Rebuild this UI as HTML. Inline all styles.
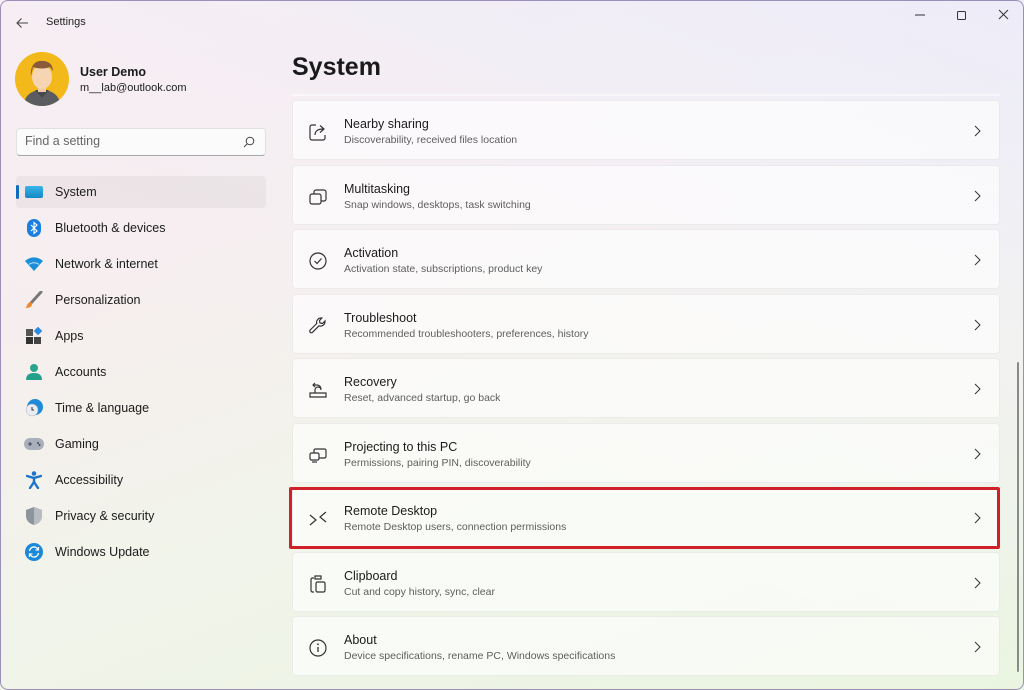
<!DOCTYPE html>
<html><head><meta charset="utf-8"><style>
*{margin:0;padding:0;box-sizing:border-box}
body{width:1024px;height:690px;overflow:hidden;font-family:"Segoe UI","Liberation Sans",sans-serif;color:#1b1b1b;position:relative;
background:linear-gradient(160deg,#f7ecef 0%,#f6eeee 30%,#f1f4ea 60%,#eaf5e1 100%);}
.ov{position:absolute;inset:0;background:linear-gradient(200deg,rgba(236,236,250,.9) 0%,rgba(244,240,248,.5) 35%,rgba(255,255,255,0) 65%)}
.frame{position:absolute;inset:0;border:1px solid #9a8fb8;border-radius:8px}
.abs{position:absolute}
.nav{position:absolute;left:16px;width:250px;height:32px;display:flex;align-items:center;font-size:12.5px}
.nav .ic{width:20px;height:20px;margin-left:8px;margin-right:11px;display:flex;align-items:center;justify-content:center}
.card{position:absolute;left:292px;width:708px;height:60px;background:rgba(255,255,255,.62);border:1px solid rgba(0,0,0,.06);border-radius:4px}
.card .t{position:absolute;left:51px;top:16px;font-size:12.5px;color:#1b1b1b}
.card .s{position:absolute;left:51px;top:33px;font-size:10.5px;color:#5e5e5e}
.card .i{position:absolute;left:14px;top:20px;width:22px;height:22px}
.card .c{position:absolute;right:16px;top:24px;width:12px;height:12px}
</style></head><body>
<div class="ov"></div>
<div class="frame"></div>
<svg class="abs" style="left:15px;top:16px" width="14" height="14" viewBox="0 0 14 14"><path d="M13 7H2M6.5 2.5L2 7l4.5 4.5" stroke="#444" fill="none" stroke-width="1.1"/></svg>
<div class="abs" style="left:46px;top:16px;font-size:11px;color:#222">Settings</div>
<svg class="abs" style="left:914px;top:8px" width="100" height="16"><path d="M1 7h10" stroke="#333"/><rect x="43.5" y="3.5" width="8" height="8" rx="1" stroke="#333" fill="none"/><path d="M85 2l9 9M94 2l-9 9" stroke="#333"/></svg>
<svg class="abs" style="left:15px;top:52px" width="54" height="54" viewBox="0 0 54 54"><defs><clipPath id="cc"><circle cx="27" cy="27" r="27"/></clipPath></defs><circle cx="27" cy="27" r="27" fill="#f3b91a"/><g clip-path="url(#cc)"><path d="M8 54c2-12 10-16 19-16s17 4 19 16z" fill="#5a5c62"/><path d="M20 38l7 8 7-8" fill="#46484d"/><rect x="23" y="32" width="8" height="8" fill="#f0cba5"/><ellipse cx="27" cy="25" rx="10" ry="12" fill="#f5d5b2"/><path d="M16 24c-1-10 4-16 12-15 6 0 10 4 10 10l-3-4c-4 2-12 2-17 0z" fill="#8a5a3b"/></g></svg>
<div class="abs" style="left:80px;top:65px;font-size:12.5px;font-weight:bold">User Demo</div>
<div class="abs" style="left:80px;top:82px;font-size:11px">m__lab@outlook.com</div>
<div class="abs" style="left:16px;top:128px;width:250px;height:28px;background:#fbfbfb;border:1px solid #e3e0e0;border-bottom-color:#a8a8a8;border-radius:4px"></div>
<div class="abs" style="left:25px;top:134px;font-size:12.5px;color:#666">Find a setting</div>
<svg class="abs" style="left:243px;top:136px" width="12" height="12"><circle cx="7" cy="5" r="3.8" stroke="#444" fill="none"/><path d="M4.3 7.7L1 11" stroke="#444"/></svg>

<div class="nav" style="top:176px;background:rgba(0,0,0,.04);border-radius:4px"><div class="abs" style="left:0;top:9px;width:3px;height:14px;background:#0f6cbd;border-radius:2px"></div><div class="ic"><div style="width:18px;height:12px;background:linear-gradient(#3ab5e8,#1587c6);border-radius:2px"></div></div>System</div>
<div class="nav" style="top:212px"><div class="ic"><svg width="14" height="18"><rect width="14" height="18" rx="7" fill="#1b7fe0"/><path d="M4 6l6 6-3 2.5V3.5l3 2.5-6 6" stroke="#fff" fill="none" stroke-width="1.1"/></svg></div>Bluetooth &amp; devices</div>
<div class="nav" style="top:248px"><div class="ic"><svg width="18" height="14"><path d="M0 4a13 13 0 0 1 18 0L9 14z" fill="#1a8ed8"/><path d="M4 7.5a8 8 0 0 1 10 0" stroke="#bfe6fb" fill="none" stroke-width="1"/></svg></div>Network &amp; internet</div>
<div class="nav" style="top:284px"><div class="ic"><svg width="18" height="18"><path d="M16 1L6 12" stroke="#777" stroke-width="3" stroke-linecap="round"/><path d="M6 11c-3 0-4 3-5 6 3 0 6-1 6-4z" fill="#ef8a2c"/></svg></div>Personalization</div>
<div class="nav" style="top:320px"><div class="ic"><svg width="18" height="18"><rect x="1" y="2" width="7" height="7" fill="#555"/><rect x="1" y="10" width="7" height="7" fill="#333"/><rect x="9" y="10" width="7" height="7" fill="#444"/><rect x="10" y="1" width="6" height="6" fill="#2b8be0" transform="rotate(45 13 4)"/></svg></div>Apps</div>
<div class="nav" style="top:356px"><div class="ic"><svg width="16" height="18"><circle cx="8" cy="5" r="4" fill="#2aa58d"/><path d="M0 17c0-5 3-7 8-7s8 2 8 7z" fill="#22a08a"/></svg></div>Accounts</div>
<div class="nav" style="top:392px"><div class="ic"><svg width="18" height="18"><circle cx="10" cy="8" r="8" fill="#1f8bd8"/><circle cx="7" cy="11" r="6" fill="#e9edf2" stroke="#aab" stroke-width=".5"/><path d="M7 8v3h2" stroke="#333" fill="none"/></svg></div>Time &amp; language</div>
<div class="nav" style="top:428px"><div class="ic"><svg width="20" height="12"><rect width="20" height="12" rx="6" fill="#a9b0bc"/><path d="M4 6h4M6 4v4" stroke="#445"/><circle cx="14" cy="5" r="1" fill="#445"/><circle cx="15.5" cy="7" r="1" fill="#445"/></svg></div>Gaming</div>
<div class="nav" style="top:464px"><div class="ic"><svg width="16" height="18"><circle cx="8" cy="2.5" r="2.3" fill="#1b74c9"/><path d="M1 5l7 2 7-2M8 7v4l-4 6M8 11l4 6" stroke="#1b74c9" stroke-width="2.4" fill="none" stroke-linecap="round"/></svg></div>Accessibility</div>
<div class="nav" style="top:500px"><div class="ic"><svg width="16" height="18"><path d="M8 0l8 3v6c0 5-4 8-8 9-4-1-8-4-8-9V3z" fill="#8e949c"/><path d="M8 0l8 3v6c0 5-4 8-8 9z" fill="#b7bcc3"/></svg></div>Privacy &amp; security</div>
<div class="nav" style="top:536px"><div class="ic"><svg width="18" height="18"><circle cx="9" cy="9" r="9" fill="#1b88d8"/><path d="M4.5 8a4.5 4.5 0 0 1 8.5-1.5M13.5 10a4.5 4.5 0 0 1-8.5 1.5" stroke="#fff" fill="none" stroke-width="1.4"/><path d="M13.5 4v3h-3M4.5 14v-3h3" stroke="#fff" fill="none" stroke-width="1.2"/></svg></div>Windows Update</div>

<div class="abs" style="left:292px;top:53px;font-size:25px;font-weight:600;color:#1a1a1a">System</div>
<div class="abs" style="left:292px;top:94px;width:708px;height:2px;background:rgba(255,255,255,.5)"></div>
<div class="abs" style="left:1017px;top:362px;width:2px;height:310px;background:#8a8a8a;border-radius:1px"></div>

<div class="card" style="top:100px"><svg class="i" viewBox="0 0 22 22"><path d="M9 4H5a2 2 0 0 0-2 2v11a2 2 0 0 0 2 2h11a2 2 0 0 0 2-2v-3" stroke="#333" fill="none" stroke-width="1.2"/><path d="M8 14c0-4 3-6 8-6M13 4.5l4 3.5-4 3.5" stroke="#333" fill="none" stroke-width="1.2"/></svg><div class="t">Nearby sharing</div><div class="s">Discoverability, received files location</div><svg class="c"><path d="M4 1l5 5-5 5" stroke="#333" fill="none"/></svg></div>
<div class="card" style="top:165px"><svg class="i" viewBox="0 0 22 22"><rect x="3" y="8" width="11" height="10" rx="2" stroke="#333" fill="none" stroke-width="1.2"/><path d="M7 8V6a2 2 0 0 1 2-2h8a2 2 0 0 1 2 2v7a2 2 0 0 1-2 2h-3" stroke="#333" fill="none" stroke-width="1.2"/></svg><div class="t">Multitasking</div><div class="s">Snap windows, desktops, task switching</div><svg class="c"><path d="M4 1l5 5-5 5" stroke="#333" fill="none"/></svg></div>
<div class="card" style="top:229px"><svg class="i" viewBox="0 0 22 22"><circle cx="11" cy="11" r="8" stroke="#333" fill="none" stroke-width="1.2"/><path d="M7.5 11l2.5 2.5 4.5-5" stroke="#333" fill="none" stroke-width="1.2"/></svg><div class="t">Activation</div><div class="s">Activation state, subscriptions, product key</div><svg class="c"><path d="M4 1l5 5-5 5" stroke="#333" fill="none"/></svg></div>
<div class="card" style="top:294px"><svg class="i" viewBox="0 0 22 22"><path d="M18 6.5a4.5 4.5 0 0 1-6 4.3L5.5 17.3a1.6 1.6 0 0 1-2.3-2.3L9.7 8.5A4.5 4.5 0 0 1 14.8 3L12.5 5.5 13 8l2.5.5L18 6z" stroke="#333" fill="none" stroke-width="1.2"/></svg><div class="t">Troubleshoot</div><div class="s">Recommended troubleshooters, preferences, history</div><svg class="c"><path d="M4 1l5 5-5 5" stroke="#333" fill="none"/></svg></div>
<div class="card" style="top:358px"><svg class="i" viewBox="0 0 22 22"><path d="M3 14h16v4H3zM8 14v-3a3 3 0 0 1 6 0M8 4L6 6l2 2M6 6h4a4 4 0 0 1 4 4" stroke="#333" fill="none" stroke-width="1.2"/></svg><div class="t">Recovery</div><div class="s">Reset, advanced startup, go back</div><svg class="c"><path d="M4 1l5 5-5 5" stroke="#333" fill="none"/></svg></div>
<div class="card" style="top:423px"><svg class="i" viewBox="0 0 22 22"><rect x="7" y="5" width="12" height="9" rx="1.5" stroke="#333" fill="none" stroke-width="1.2"/><rect x="3" y="9" width="9" height="7" rx="1.5" stroke="#333" fill="#fff" stroke-width="1.2"/><path d="M5 18h5" stroke="#333" stroke-width="1.2"/></svg><div class="t">Projecting to this PC</div><div class="s">Permissions, pairing PIN, discoverability</div><svg class="c"><path d="M4 1l5 5-5 5" stroke="#333" fill="none"/></svg></div>
<div class="card" style="top:487px"><svg class="i" viewBox="0 0 22 22"><path d="M3 7l6 5-6 5M19 4l-6 5 6 5" stroke="#333" fill="none" stroke-width="1.2"/></svg><div class="t">Remote Desktop</div><div class="s">Remote Desktop users, connection permissions</div><svg class="c"><path d="M4 1l5 5-5 5" stroke="#333" fill="none"/></svg></div>
<div class="abs" style="left:289px;top:487px;width:711px;height:62px;border:3px solid #d0202a;border-radius:2px"></div>
<div class="card" style="top:552px"><svg class="i" viewBox="0 0 22 22"><path d="M7 5H5.5A1.5 1.5 0 0 0 4 6.5v11A1.5 1.5 0 0 0 5.5 19H7M8 3h6v3H8z" stroke="#333" fill="none" stroke-width="1.2"/><rect x="9" y="9" width="9" height="10" rx="1.5" stroke="#333" fill="none" stroke-width="1.2"/></svg><div class="t">Clipboard</div><div class="s">Cut and copy history, sync, clear</div><svg class="c"><path d="M4 1l5 5-5 5" stroke="#333" fill="none"/></svg></div>
<div class="card" style="top:616px"><svg class="i" viewBox="0 0 22 22"><circle cx="11" cy="11" r="8" stroke="#333" fill="none" stroke-width="1.2"/><path d="M11 10v5" stroke="#333" stroke-width="1.3"/><circle cx="11" cy="7.3" r=".9" fill="#333"/></svg><div class="t">About</div><div class="s">Device specifications, rename PC, Windows specifications</div><svg class="c"><path d="M4 1l5 5-5 5" stroke="#333" fill="none"/></svg></div>
</body></html>
